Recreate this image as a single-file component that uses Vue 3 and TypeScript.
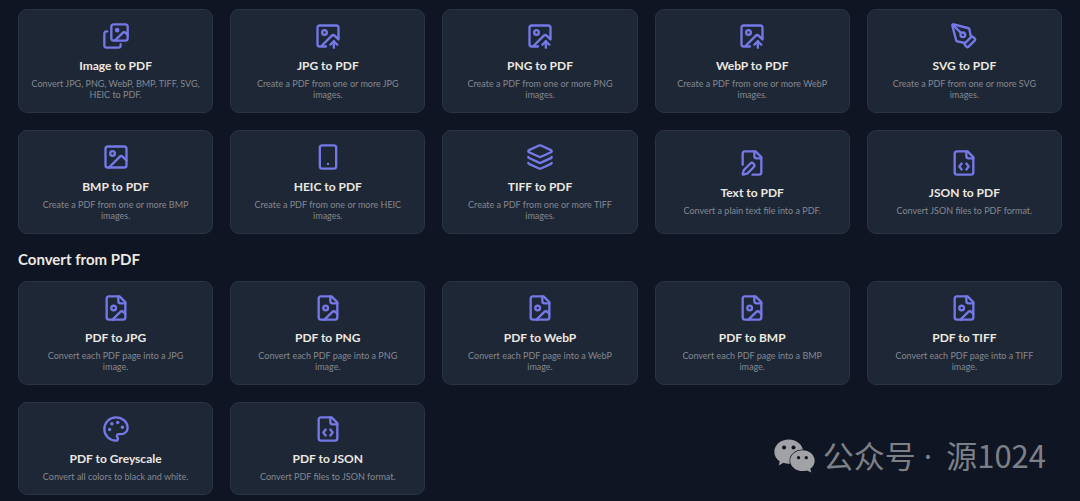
<script setup lang="ts">
type IconName =
  | 'images'
  | 'image-up'
  | 'pen-tool'
  | 'image'
  | 'phone'
  | 'layers'
  | 'file-pen'
  | 'file-code'
  | 'file-image'
  | 'palette'

interface Tool {
  title: string
  text: string
  icon: IconName
}

const toPdf: Tool[] = [
  { title: 'Image to PDF', text: 'Convert JPG, PNG, WebP, BMP, TIFF, SVG,\nHEIC to PDF.', icon: 'images' },
  { title: 'JPG to PDF', text: 'Create a PDF from one or more JPG\nimages.', icon: 'image-up' },
  { title: 'PNG to PDF', text: 'Create a PDF from one or more PNG\nimages.', icon: 'image-up' },
  { title: 'WebP to PDF', text: 'Create a PDF from one or more WebP\nimages.', icon: 'image-up' },
  { title: 'SVG to PDF', text: 'Create a PDF from one or more SVG\nimages.', icon: 'pen-tool' },
  { title: 'BMP to PDF', text: 'Create a PDF from one or more BMP\nimages.', icon: 'image' },
  { title: 'HEIC to PDF', text: 'Create a PDF from one or more HEIC\nimages.', icon: 'phone' },
  { title: 'TIFF to PDF', text: 'Create a PDF from one or more TIFF\nimages.', icon: 'layers' },
  { title: 'Text to PDF', text: 'Convert a plain text file into a PDF.', icon: 'file-pen' },
  { title: 'JSON to PDF', text: 'Convert JSON files to PDF format.', icon: 'file-code' },
]

const fromPdf: Tool[] = [
  { title: 'PDF to JPG', text: 'Convert each PDF page into a JPG\nimage.', icon: 'file-image' },
  { title: 'PDF to PNG', text: 'Convert each PDF page into a PNG\nimage.', icon: 'file-image' },
  { title: 'PDF to WebP', text: 'Convert each PDF page into a WebP\nimage.', icon: 'file-image' },
  { title: 'PDF to BMP', text: 'Convert each PDF page into a BMP\nimage.', icon: 'file-image' },
  { title: 'PDF to TIFF', text: 'Convert each PDF page into a TIFF\nimage.', icon: 'file-image' },
  { title: 'PDF to Greyscale', text: 'Convert all colors to black and white.', icon: 'palette' },
  { title: 'PDF to JSON', text: 'Convert PDF files to JSON format.', icon: 'file-code' },
]

const groups: { heading: string; tools: Tool[] }[] = [
  { heading: '', tools: toPdf },
  { heading: 'Convert from PDF', tools: fromPdf },
]

const fileOutline = [
  'M15 2H6a2 2 0 0 0-2 2v16a2 2 0 0 0 2 2h12a2 2 0 0 0 2-2V7Z',
  'M14 2v4a2 2 0 0 0 2 2h4',
]

const dot = (x: number, y: number, r: number): string =>
  `M${x - r} ${y}a${r} ${r} 0 1 0 ${2 * r} 0a${r} ${r} 0 1 0 ${-2 * r} 0`

const icons: Record<IconName, string[]> = {
  images: [
    'M10 2h10a2 2 0 0 1 2 2v10a2 2 0 0 1-2 2H10a2 2 0 0 1-2-2V4a2 2 0 0 1 2-2Z',
    'M16 19v1a2 2 0 0 1-2 2H4a2 2 0 0 1-2-2V10a2 2 0 0 1 2-2h.500',
    'm22 11-1.296-1.296a2.41 2.41 0 0 0-3.408 0L11 16',
    dot(13, 7, 1),
  ],
  'image-up': [
    'M10.3 21H5a2 2 0 0 1-2-2V5a2 2 0 0 1 2-2h14a2 2 0 0 1 2 2v10l-3.1-3.1a2 2 0 0 0-2.814.014L6 21',
    'm14 19.5 3-3 3 3',
    'M17 22v-5.5',
    dot(9, 9, 2),
  ],
  'pen-tool': [
    'M15.707 21.293a1 1 0 0 1-1.414 0l-1.586-1.586a1 1 0 0 1 0-1.414l5.586-5.586a1 1 0 0 1 1.414 0l1.586 1.586a1 1 0 0 1 0 1.414z',
    'm18 13-1.375-6.874a1 1 0 0 0-.746-.776L3.235 2.028a1 1 0 0 0-1.207 1.207L5.35 15.879a1 1 0 0 0 .776.746L13 18',
    'm2.3 2.3 7.286 7.286',
    dot(11, 11, 2),
  ],
  image: [
    'M5 3h14a2 2 0 0 1 2 2v14a2 2 0 0 1-2 2H5a2 2 0 0 1-2-2V5a2 2 0 0 1 2-2Z',
    'm21 15-3.086-3.086a2 2 0 0 0-2.828 0L6 21',
    dot(9, 9, 2),
  ],
  phone: [
    'M7 2h10a2 2 0 0 1 2 2v16a2 2 0 0 1-2 2H7a2 2 0 0 1-2-2V4a2 2 0 0 1 2-2Z',
    'M12 18h.01',
  ],
  layers: [
    'M12.83 2.18a2 2 0 0 0-1.66 0L2.6 6.08a1 1 0 0 0 0 1.83l8.58 3.91a2 2 0 0 0 1.66 0l8.58-3.9a1 1 0 0 0 0-1.83z',
    'M2 12a1 1 0 0 0 .58.91l8.6 3.91a2 2 0 0 0 1.65 0l8.58-3.9A1 1 0 0 0 22 12',
    'M2 17a1 1 0 0 0 .58.91l8.6 3.91a2 2 0 0 0 1.65 0l8.58-3.9A1 1 0 0 0 22 17',
  ],
  'file-pen': [
    'M4 13.500V4a2 2 0 0 1 2-2h9l5 5v13a2 2 0 0 1-2 2h-5.500',
    'M14 2v4a2 2 0 0 0 2 2h4',
    'M13.378 15.626a1 1 0 1 0-3.004-3.004l-5.010 5.012a2 2 0 0 0-.506.854l-.837 2.870a.5.5 0 0 0 .620.620l2.870-.837a2 2 0 0 0 .854-.506z',
  ],
  'file-code': [...fileOutline, 'M10 12.500 8 15l2 2.500', 'm14 12.500 2 2.500-2 2.500'],
  'file-image': [...fileOutline, dot(10, 12, 2), 'm20 17-1.296-1.296a2.41 2.41 0 0 0-3.408 0L9 22'],
  palette: [
    'M12 2C6.500 2 2 6.500 2 12s4.500 10 10 10c.926 0 1.648-.746 1.648-1.688 0-.437-.180-.835-.437-1.125-.290-.289-.438-.652-.438-1.125a1.640 1.640 0 0 1 1.668-1.668h1.996c3.051 0 5.555-2.503 5.555-5.554C21.965 6.012 17.461 2 12 2Z',
    dot(13.5, 6.5, 0.5),
    dot(17.5, 10.5, 0.5),
    dot(8.5, 7.5, 0.5),
    dot(6.5, 12.5, 0.5),
  ],
}
</script>

<template>
  <main class="page">
    <section v-for="(group, i) in groups" :key="i" class="group">
      <h2 v-if="group.heading" class="heading">{{ group.heading }}</h2>
      <div class="grid">
        <a v-for="tool in group.tools" :key="tool.title" class="card" href="#">
          <svg class="icon" viewBox="0 0 24 24" aria-hidden="true">
            <path v-for="(d, n) in icons[tool.icon]" :key="n" :d="d" />
          </svg>
          <h3 class="title">{{ tool.title }}</h3>
          <p class="text">{{ tool.text }}</p>
        </a>
      </div>
    </section>

    <div class="watermark">
      <svg class="bubbles" viewBox="0 0 122 100" aria-hidden="true">
        <path
          class="bubble"
          d="M44 1C20 1 1 17 1 38c0 12 6 21 16 28l-3 12 14-8c5 2 10 3 16 3 24 0 43-15 43-35S68 1 44 1Z"
        />
        <path
          class="bubble front"
          d="M85 33c-20 0-37 14-37 31s17 31 37 31c5 0 9-1 13-2l13 6-3-11c8-6 13-14 13-24 0-17-16-31-36-31Z"
        />
        <circle class="eye" cx="30" cy="25" r="6" />
        <circle class="eye" cx="58" cy="25" r="6" />
        <circle class="eye" cx="73" cy="55" r="5" />
        <circle class="eye" cx="96" cy="55" r="5" />
      </svg>
      <p class="account">公众号<span class="separator">·</span>源1024</p>
    </div>
  </main>
</template>

<style>
body {
  margin: 0;
  background: #0f1523;
}
</style>

<style scoped>
.page {
  position: relative;
  box-sizing: border-box;
  min-height: 100vh;
  padding: 9px 18px 6px;
  font-family: Lato, 'Noto Sans', sans-serif;
}

.heading {
  margin: 0;
  padding: 13px 0 10px;
  font-size: 15px;
  line-height: 24px;
  font-weight: 700;
  color: #ece8e1;
}

.grid {
  display: grid;
  grid-template-columns: repeat(5, minmax(0, 1fr));
  gap: 17px;
}

.card {
  display: flex;
  flex-direction: column;
  align-items: center;
  justify-content: center;
  padding: 12px;
  border: 1px solid #2b3441;
  border-radius: 9px;
  background: #1e2735;
  text-align: center;
  text-decoration: none;
}

.icon {
  width: 28px;
  height: 28px;
  fill: none;
  stroke: #7579e8;
  stroke-width: 2;
  stroke-linecap: round;
  stroke-linejoin: round;
}

.title {
  margin: 8px 0 4px;
  font-size: 12px;
  line-height: 16px;
  font-weight: 700;
  color: #ece8e1;
}

.text {
  margin: 0;
  font-size: 9px;
  line-height: 11px;
  color: #848891;
  white-space: pre-line;
}

.watermark {
  position: absolute;
  right: 34px;
  bottom: 23px;
  display: flex;
  align-items: center;
  gap: 8px;
  font-family: 'Noto Sans CJK SC', sans-serif;
  font-size: 31px;
  line-height: 44px;
  color: #7d8087;
  white-space: nowrap;
}

.account {
  margin: 0;
}

.separator {
  padding: 0 14px 0 8px;
  font-family: 'Noto Sans', sans-serif;
}

.bubbles {
  width: 41px;
  height: 34px;
}

.bubble {
  fill: #a0a2a6;
}

.front {
  stroke: #0f1523;
  stroke-width: 4;
  paint-order: stroke;
}

.eye {
  fill: #0f1523;
}
</style>
